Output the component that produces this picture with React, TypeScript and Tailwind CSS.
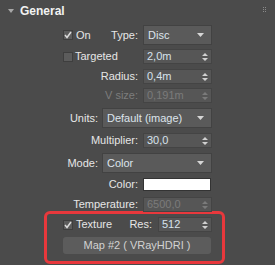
import React from 'react';

const font = { fontFamily: '"Liberation Sans", Arial, sans-serif' };

function Check({ checked }: { checked?: boolean }) {
  return (
    <div className="w-[10px] h-[10px] bg-[#5c5c5c] border border-[#3e3e3e] flex items-center justify-center shrink-0">
      {checked && (
        <svg width="8" height="8" viewBox="0 0 8 8">
          <path d="M1 4 L3 6.5 L7 1" stroke="#dcdcdc" strokeWidth="1.5" fill="none" />
        </svg>
      )}
    </div>
  );
}

function Dropdown({ value, w }: { value: string; w: string }) {
  return (
    <div className={`${w} h-[20px] bg-[#5a5a5a] border border-[#424242] flex items-center pl-[4px] pr-[7px] text-[11px] text-[#dde4ec]`}>
      <span className="flex-1">{value}</span>
      <svg width="7" height="4" viewBox="0 0 7 4">
        <path d="M0 0 H7 L3.5 4 Z" fill="#d6d6d6" />
      </svg>
    </div>
  );
}

function Spinner({ value, w, disabled }: { value: string; w: string; disabled?: boolean }) {
  const c = disabled ? '#7b7b7b' : '#d8e2ec';
  return (
    <div className={`${w} h-[15px] bg-[#565656] border border-[#444444] flex items-center pl-[3px] pr-[3px] text-[11px]`} style={{ color: c }}>
      <span className="flex-1 leading-none">{value}</span>
      <svg width="6" height="10" viewBox="0 0 6 10">
        <path d="M0 4 L3 1 L6 4 Z M0 6 L6 6 L3 9 Z" fill={disabled ? '#7b7b7b' : '#d0d0d0'} />
      </svg>
    </div>
  );
}

function Row({ label, children, mt, disabled }: { label: string; children: React.ReactNode; mt: string; disabled?: boolean }) {
  return (
    <div className={`flex items-center ${mt}`}>
      <div className={`w-[139px] text-right pr-[1px] ${disabled ? 'text-[#7d7d7d]' : 'text-[#e6e6e6]'}`}>{label}</div>
      <div className="ml-[4px]">{children}</div>
    </div>
  );
}

export default function App() {
  return (
    <div className="w-[275px] h-[265px] bg-[#4b4b4b] overflow-hidden relative text-[11px] leading-[13px] text-[#e6e6e6]" style={font}>
      {/* header */}
      <div className="h-[25px] flex items-start pt-[4px]">
        <svg className="ml-[8px] mt-[5px]" width="6" height="4" viewBox="0 0 6 4">
          <path d="M0 0 H6 L3 4 Z" fill="#a8a8a8" />
        </svg>
        <span className="ml-[6px] text-[12px] font-bold text-[#f2f2f2] leading-[14px]">General</span>
        <div className="ml-auto mr-[9px] mt-[3px] grid grid-cols-2 gap-[1px]">
          {[0, 1, 2, 3, 4, 5].map(i => (
            <span key={i} className="w-[1px] h-[1px] bg-[#8a8a8a]" />
          ))}
        </div>
      </div>

      {/* On / Type */}
      <div className="flex items-center">
        <div className="w-[139px] flex items-center pl-[63px] pr-[1px]">
          <Check checked />
          <span className="ml-[3px]">On</span>
          <span className="ml-auto">Type:</span>
        </div>
        <div className="ml-[4px]"><Dropdown value="Disc" w="w-[69px]" /></div>
      </div>

      {/* Targeted */}
      <div className="flex items-center mt-[4px]">
        <div className="w-[139px] flex items-center pl-[63px]">
          <Check />
          <span className="ml-[2px]">Targeted</span>
        </div>
        <div className="ml-[4px]"><Spinner value="2,0m" w="w-[69px]" /></div>
      </div>

      <Row label="Radius:" mt="mt-[5px]"><Spinner value="0,4m" w="w-[69px]" /></Row>
      <Row label="V size:" mt="mt-[4px]" disabled><Spinner value="0,191m" w="w-[69px]" disabled /></Row>

      <div className="flex items-center mt-[5px]">
        <div className="w-[98px] text-right">Units:</div>
        <div className="ml-[4px]"><Dropdown value="Default (image)" w="w-[110px]" /></div>
      </div>

      <Row label="Multiplier:" mt="mt-[5px]"><Spinner value="30,0" w="w-[69px]" /></Row>

      <div className="flex items-center mt-[5px]">
        <div className="w-[98px] text-right">Mode:</div>
        <div className="ml-[4px]"><Dropdown value="Color" w="w-[110px]" /></div>
      </div>

      <Row label="Color:" mt="mt-[5px]">
        <div className="w-[68px] h-[13px] border border-[#333333] bg-white" />
      </Row>

      <Row label="Temperature:" mt="mt-[6px]">
        <Spinner value="6500,0" w="w-[69px]" disabled />
      </Row>

      {/* highlighted texture group */}
      <div className="ml-[44px] mt-[-1px] w-[181px] h-[53px] border-[3px] border-[#e8383c] rounded-[6px] pl-[16px] pt-[3px]">
        <div className="flex items-center">
          <div className="w-[89px] flex items-center">
            <Check checked />
            <span className="ml-[3px]">Texture</span>
            <span className="ml-auto">Res:</span>
          </div>
          <div className="ml-[6px]"><Spinner value="512" w="w-[54px]" /></div>
        </div>
        <div className="mt-[5px] w-[148px] h-[17px] bg-[#5c5c5c] rounded-[3px] flex items-center justify-center text-[#d2d2d2]">
          Map #2 ( VRayHDRI )
        </div>
      </div>
    </div>
  );
}
